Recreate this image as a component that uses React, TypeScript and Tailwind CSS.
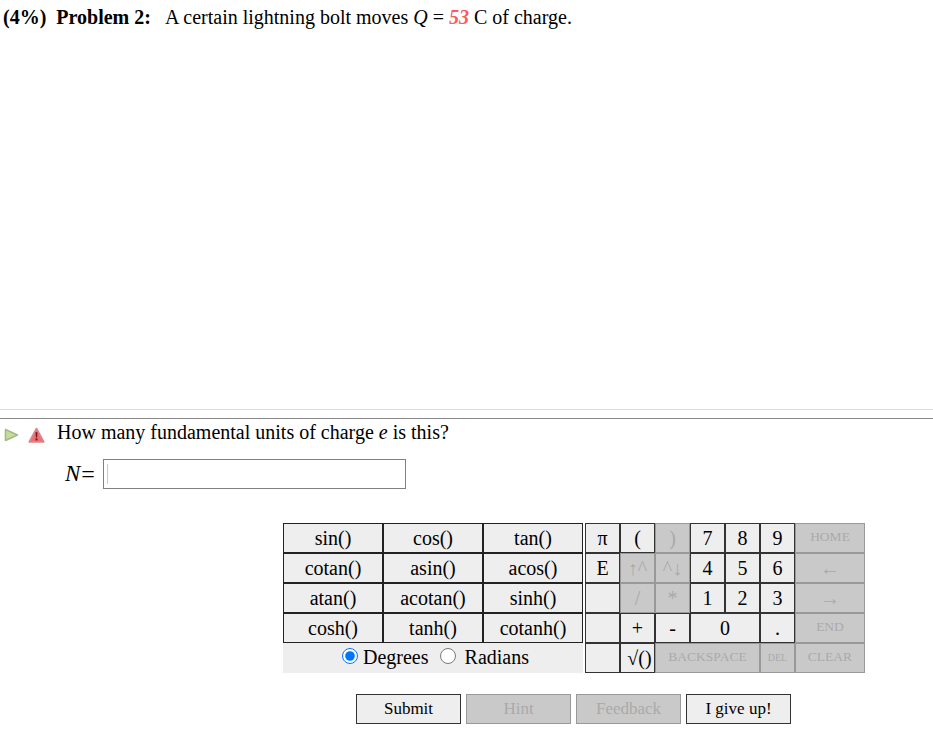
const fnKeys = ["sin()", "cos()", "tan()", "cotan()", "asin()", "acos()", "atan()", "acotan()", "sinh()", "cosh()", "tanh()", "cotanh()"]

type Pad = { label: string; off?: boolean; span?: number; small?: boolean }

const padKeys: Pad[] = [
	{ label: "π" }, { label: "(" }, { label: ")", off: true }, { label: "7" }, { label: "8" }, { label: "9" }, { label: "HOME", off: true, small: true, span: 2 },
	{ label: "E" }, { label: "↑^", off: true }, { label: "^↓", off: true }, { label: "4" }, { label: "5" }, { label: "6" }, { label: "←", off: true, span: 2 },
	{ label: "" }, { label: "/", off: true }, { label: "*", off: true }, { label: "1" }, { label: "2" }, { label: "3" }, { label: "→", off: true, span: 2 },
	{ label: "" }, { label: "+" }, { label: "-" }, { label: "0", span: 2 }, { label: "." }, { label: "END", off: true, small: true, span: 2 },
	{ label: "" }, { label: "√()" }, { label: "BACKSPACE", off: true, small: true, span: 3 }, { label: "DEL", off: true, small: true }, { label: "CLEAR", off: true, small: true, span: 2 },
]

const spanClass: Record<number, string> = { 1: "col-span-1", 2: "col-span-2", 3: "col-span-3" }

function PadKey({ k }: { k: Pad }) {
	return (
		<div
			className={`${spanClass[k.span ?? 1]} flex h-[30px] items-center justify-center overflow-hidden border pb-px whitespace-nowrap ${
				k.off ? "border-[#999] bg-[#c9c9c9] text-[#a9a9a9]" : "border-[#333] bg-[#eee] text-black"
			} ${k.small ? "text-[13.5px]" : "text-[20px]"} ${k.label === "DEL" ? "!text-[10px]" : ""} ${k.label === "√()" ? "pl-[4px]" : ""}`}
		>
			{k.label}
		</div>
	)
}

function ActionButton({ label, off }: { label: string; off?: boolean }) {
	return (
		<div
			className={`flex h-[30px] w-[105px] items-center justify-center border text-[17px] ${
				off ? "border-[#999] bg-[#c9c9c9] text-[#a9a9a9]" : "border-[#333] bg-[#eee] text-black"
			}`}
		>
			{label}
		</div>
	)
}

function PlayIcon() {
	return (
		<svg width="15" height="14" viewBox="0 0 15 14">
			<path d="M1.5 1.5 L13.5 7 L1.5 12.5 Z" fill="#c5dd96" stroke="#a3b98a" strokeWidth="1.6" strokeLinejoin="round" />
		</svg>
	)
}

function WarnIcon() {
	return (
		<svg width="17" height="17" viewBox="0 0 17 17">
			<path d="M8.5 1.5 L15.8 15 L1.2 15 Z" fill="#ee6f73" stroke="#d9868a" strokeWidth="1.6" strokeLinejoin="round" />
			<path d="M7.5 5.2 H9.5 L9.1 10.6 H7.9 Z" fill="#7a1518" />
			<rect x="7.5" y="11.4" width="2" height="2" fill="#7a1518" />
		</svg>
	)
}

export default function App() {
	return (
		<div className="h-[734px] w-[933px] overflow-hidden bg-white font-['Liberation_Serif',serif] text-black">
			<div className="h-[409px] pt-[6px] pl-[3px] text-[20px] leading-[23px]">
				<b>(4%)</b>
				<b className="ml-[10px]">Problem 2:</b>
				<span className="ml-[14px]">
					A certain lightning bolt moves <i>Q</i> = <i className="font-bold text-[#ff5a5a]">53</i> C of charge.
				</span>
			</div>
			<div className="h-px bg-[#ddd]" />
			<div className="mt-[8px] h-px bg-[#888]" />

			<div className="mt-[2px] flex h-[23px] items-center">
				<div className="mt-[5px] ml-[4px] flex w-[24px] items-center">
					<PlayIcon />
				</div>
				<div className="mt-[5px] flex">
					<WarnIcon />
				</div>
				<span className="ml-[12px] text-[20px] leading-[23px]">
					How many fundamental units of charge <i>e</i> is this?
				</span>
			</div>

			<div className="mt-[15px] flex h-[30px] items-center">
				<span className="ml-[65px] flex w-[38px] items-center text-[20px]">
					<i className="text-[23px]">N</i>
					<span className="ml-[1px] text-[24px]">=</span>
				</span>
				<div className="flex h-[30px] w-[303px] items-center border border-[#808080] pl-[3px]">
					<div className="h-[20px] w-px bg-[#f0b8c8]" />
				</div>
			</div>

			<div className="mt-[34px] ml-[283px] flex gap-[2px]">
				<div className="grid w-[300px] grid-cols-3">
					{fnKeys.map((k) => (
						<div key={k} className="flex h-[30px] items-center justify-center border border-[#222] bg-[#eee] pb-px text-[20px]">
							{k}
						</div>
					))}
					<div className="col-span-3 flex h-[30px] items-center justify-center bg-[#eee] pb-[3px] pl-[5px] text-[20px]">
						<input type="radio" name="ang" defaultChecked className="mr-[5px] mb-[2px] h-[16px] w-[16px]" />
						<span>Degrees</span>
						<input type="radio" name="ang" className="mr-[9px] mb-[2px] ml-[11px] h-[16px] w-[16px]" />
						<span>Radians</span>
					</div>
				</div>
				<div className="grid w-[280px] grid-cols-8">
					{padKeys.map((k, i) => (
						<PadKey key={i} k={k} />
					))}
				</div>
			</div>

			<div className="mt-[21px] ml-[356px] flex gap-[5px]">
				<ActionButton label="Submit" />
				<ActionButton label="Hint" off />
				<ActionButton label="Feedback" off />
				<ActionButton label="I give up!" />
			</div>
		</div>
	)
}
